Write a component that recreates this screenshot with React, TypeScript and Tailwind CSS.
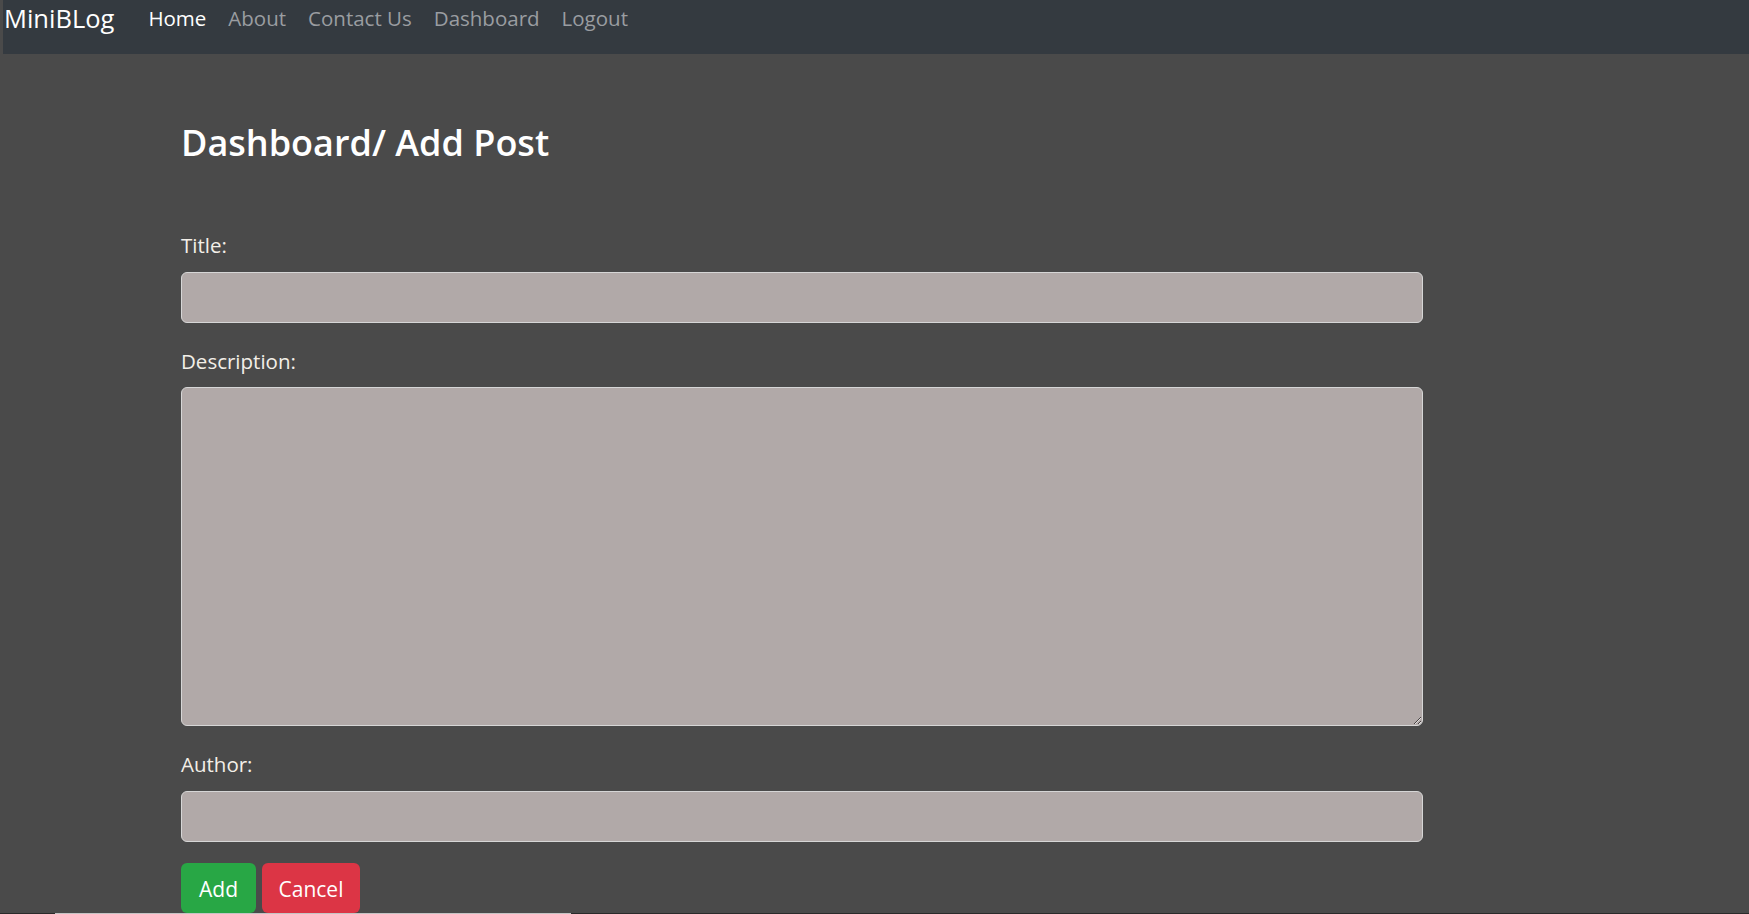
import React from 'react';

const links = ['Home', 'About', 'Contact Us', 'Dashboard', 'Logout'];

export default function App() {
  return (
    <div
      className="relative h-screen overflow-hidden bg-[#4a4a4a] pl-[3px] text-white"
      style={{ fontFamily: '"Segoe UI", "Open Sans", "Noto Sans", sans-serif' }}
    >
      {/* Navbar */}
      <nav className="flex h-[54px] items-start bg-[#343a40] pl-[1px]">
        <a href="#" className="mr-[23px] text-[25.5px] leading-[36px] text-white">
          MiniBLog
        </a>
        <ul className="flex">
          {links.map((l, i) => (
            <li key={l}>
              <a
                href="#"
                className={`block px-[11px] text-[20.5px] leading-[36px] ${i === 0 ? 'text-white' : 'text-[#9a9da1]'}`}
              >
                {l}
              </a>
            </li>
          ))}
        </ul>
      </nav>

      {/* Form */}
      <div className="ml-[178px] w-[1242px]">
        <h1 className="mt-[67px] text-[36px] font-semibold leading-[43px] text-white">Dashboard/ Add Post</h1>

        <form className="mt-[64px] flex flex-col" onSubmit={(e) => e.preventDefault()}>
          <label className="text-[20.5px] leading-[34px] text-[#f3efe8]">Title:</label>
          <input
            type="text"
            className="mt-[10px] h-[51px] w-full rounded-[6px] border border-[#d6d6d6] bg-[#b1a9a8] px-3 outline-none"
          />

          <label className="mt-[21px] text-[20.5px] leading-[34px] text-[#f3efe8]">Description:</label>
          <textarea className="mt-[9px] h-[339px] w-full rounded-[6px] border border-[#d6d6d6] bg-[#b1a9a8] px-3 outline-none" />

          <label className="mt-[21px] text-[20.5px] leading-[34px] text-[#f3efe8]">Author:</label>
          <input
            type="text"
            className="mt-[10px] h-[51px] w-full rounded-[6px] border border-[#d6d6d6] bg-[#b1a9a8] px-3 outline-none"
          />

          <div className="mt-[21px] flex gap-[6px]">
            <button type="submit" className="h-[50px] w-[75px] rounded-[6px] bg-[#28a745] pt-[4px] text-[21px] text-white">
              Add
            </button>
            <button type="button" className="h-[50px] w-[98px] rounded-[6px] bg-[#dc3545] pt-[4px] text-[21px] text-white">
              Cancel
            </button>
          </div>
        </form>
      </div>

      {/* bottom edge strip */}
      <div className="absolute bottom-0 left-0 flex h-px w-full">
        <div className="w-[55px] bg-[#2a2a2a]" />
        <div className="w-[516px] bg-[#c4c4c4]" />
        <div className="flex-1 bg-[#2a2a2a]" />
      </div>
    </div>
  );
}
